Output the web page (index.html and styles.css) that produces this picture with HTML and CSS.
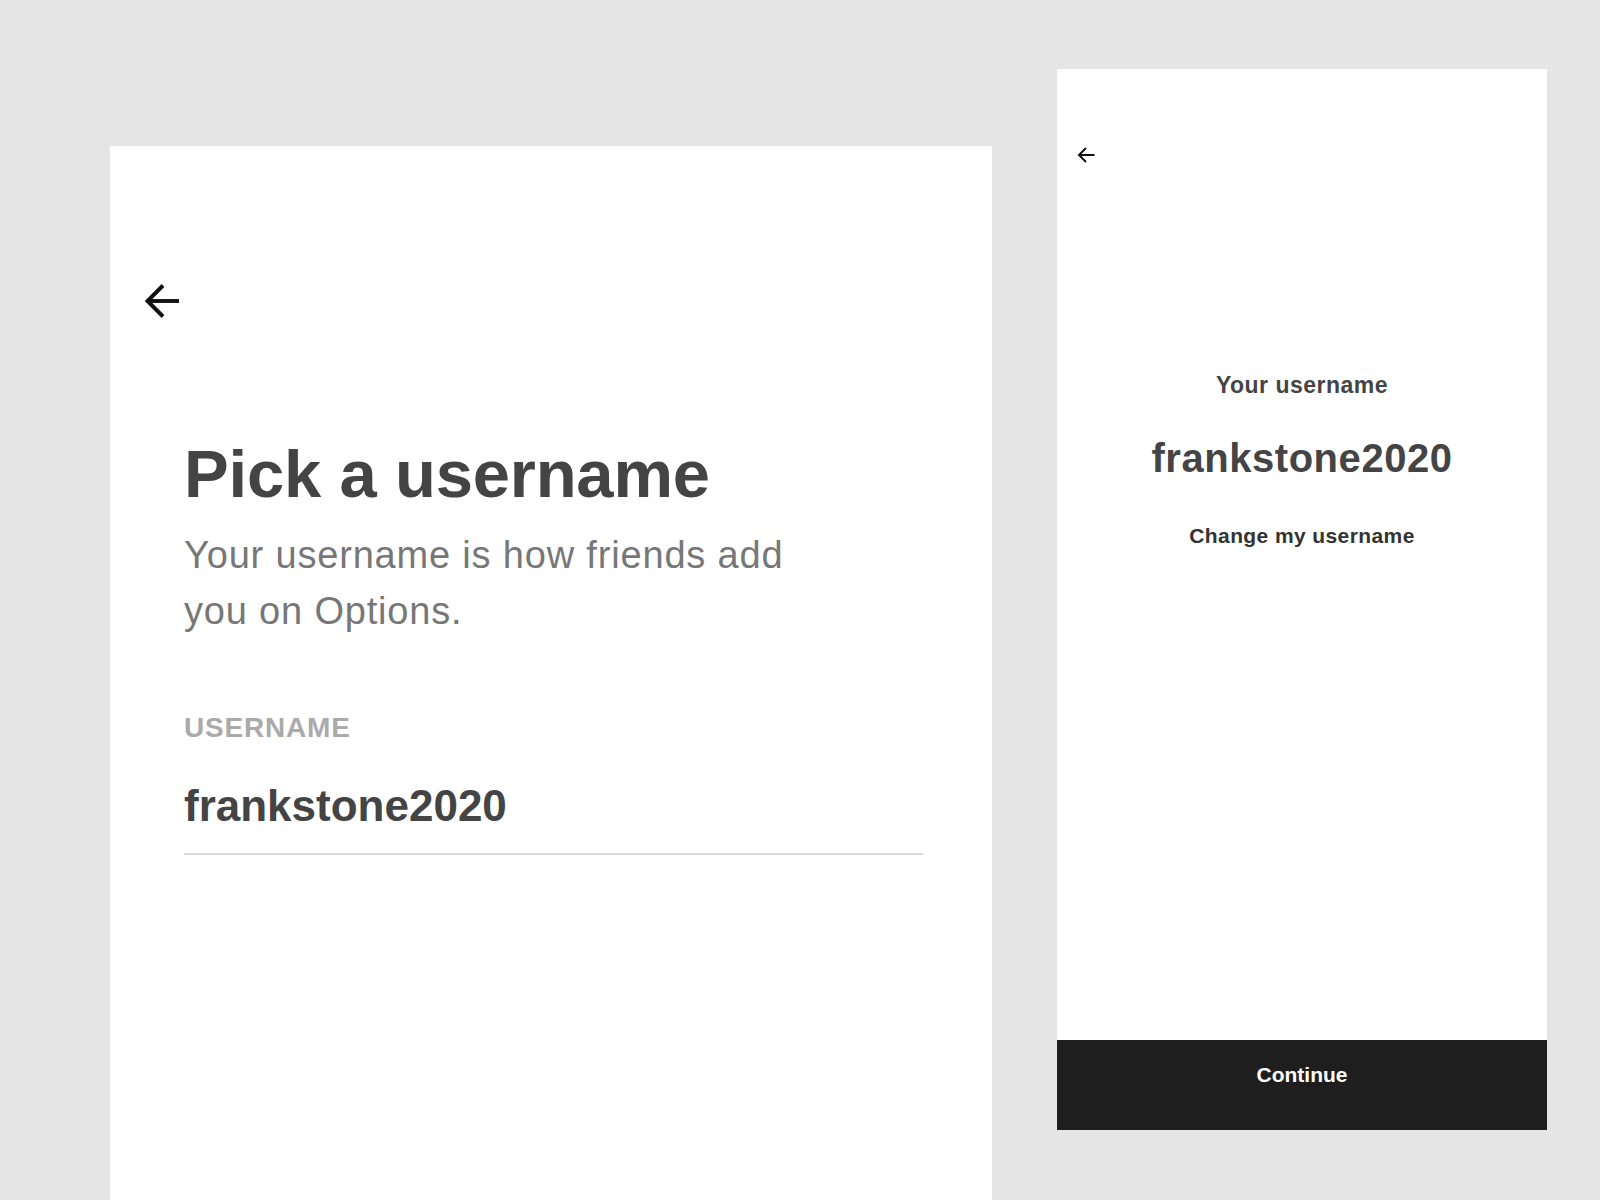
FILE: index.html
```html
<!DOCTYPE html>
<html lang="en">
<head>
<meta charset="utf-8">
<title>Pick a username</title>
<link rel="stylesheet" href="styles.css">
</head>
<body>
<main class="canvas">
  <section class="card card-pick">
    <button class="back back-lg" aria-label="Back">
      <svg width="36" height="36" viewBox="0 0 36 36" fill="none" stroke="#111" stroke-width="3.9" stroke-linejoin="miter" stroke-linecap="butt">
        <path d="M35 18H4"/>
        <path d="M19 2.5L3.5 18L19 33.5"/>
      </svg>
    </button>
    <h1 class="title">Pick a username</h1>
    <p class="subtitle">Your username is how friends add you on Options.</p>
    <label class="field-label">USERNAME</label>
    <div class="field-value">frankstone2020</div>
  </section>

  <section class="card card-confirm">
    <button class="back back-sm" aria-label="Back">
      <svg width="18" height="18" viewBox="0 0 18 18" fill="none" stroke="#111" stroke-width="2" stroke-linejoin="miter">
        <path d="M17.5 9H2.5"/>
        <path d="M9 2L2 9L9 16"/>
      </svg>
    </button>
    <div class="confirm-label">Your username</div>
    <div class="confirm-name">frankstone2020</div>
    <div class="confirm-change">Change my username</div>
    <div class="spacer"></div>
    <div class="continue">Continue</div>
  </section>
</main>
</body>
</html>
```
FILE: styles.css
```css
html, body {
  margin: 0;
  padding: 0;
}
body {
  width: 1600px;
  height: 1200px;
  overflow: hidden;
  background: #e5e5e5;
  font-family: "Liberation Sans", Arial, Helvetica, sans-serif;
}
.canvas {
  display: flex;
  align-items: flex-start;
  gap: 65px;
  padding-left: 110px;
}
.card {
  background: #fff;
  box-sizing: border-box;
}
.back {
  display: block;
  border: 0;
  background: none;
  padding: 0;
  margin: 0;
  line-height: 0;
}

/* Left card */
.card-pick {
  width: 882px;
  height: 1100px;
  margin-top: 146px;
  padding: 137px 69px 0 74px;
}
.back-lg {
  margin-left: -40px;
}
.title {
  margin: 121px 0 0;
  font-size: 67px;
  line-height: 67px;
  font-weight: 700;
  color: #444;
  letter-spacing: -0.2px;
}
.subtitle {
  margin: 20px 0 0;
  max-width: 640px;
  font-size: 38px;
  line-height: 56px;
  color: #777;
  letter-spacing: 0.82px;
}
.field-label {
  display: block;
  margin-top: 75px;
  font-size: 28px;
  line-height: 28px;
  font-weight: 700;
  color: #aaa;
  letter-spacing: 0.8px;
}
.field-value {
  margin-top: 42px;
  padding-bottom: 25px;
  border-bottom: 2px solid #dadada;
  font-size: 44px;
  line-height: 44px;
  font-weight: 700;
  color: #444;
}

/* Right card */
.card-confirm {
  width: 490px;
  height: 1061px;
  margin-top: 69px;
  padding-top: 77px;
  display: flex;
  flex-direction: column;
  align-items: center;
}
.back-sm {
  align-self: flex-start;
  margin-left: 20px;
}
.confirm-label {
  margin-top: 210px;
  font-size: 23px;
  line-height: 23px;
  font-weight: 700;
  color: #444;
  letter-spacing: 0.5px;
}
.confirm-name {
  margin-top: 41px;
  font-size: 40px;
  line-height: 40px;
  font-weight: 700;
  color: #444;
  letter-spacing: 0.55px;
}
.confirm-change {
  margin-top: 47px;
  font-size: 21px;
  line-height: 21px;
  font-weight: 700;
  color: #333;
  letter-spacing: 0.4px;
}
.spacer {
  flex: 1;
}
.continue {
  align-self: stretch;
  height: 90px;
  box-sizing: border-box;
  padding-top: 24px;
  background: #1e1e1e;
  color: #fff;
  text-align: center;
  font-size: 21px;
  line-height: 21px;
  font-weight: 700;
}
```
